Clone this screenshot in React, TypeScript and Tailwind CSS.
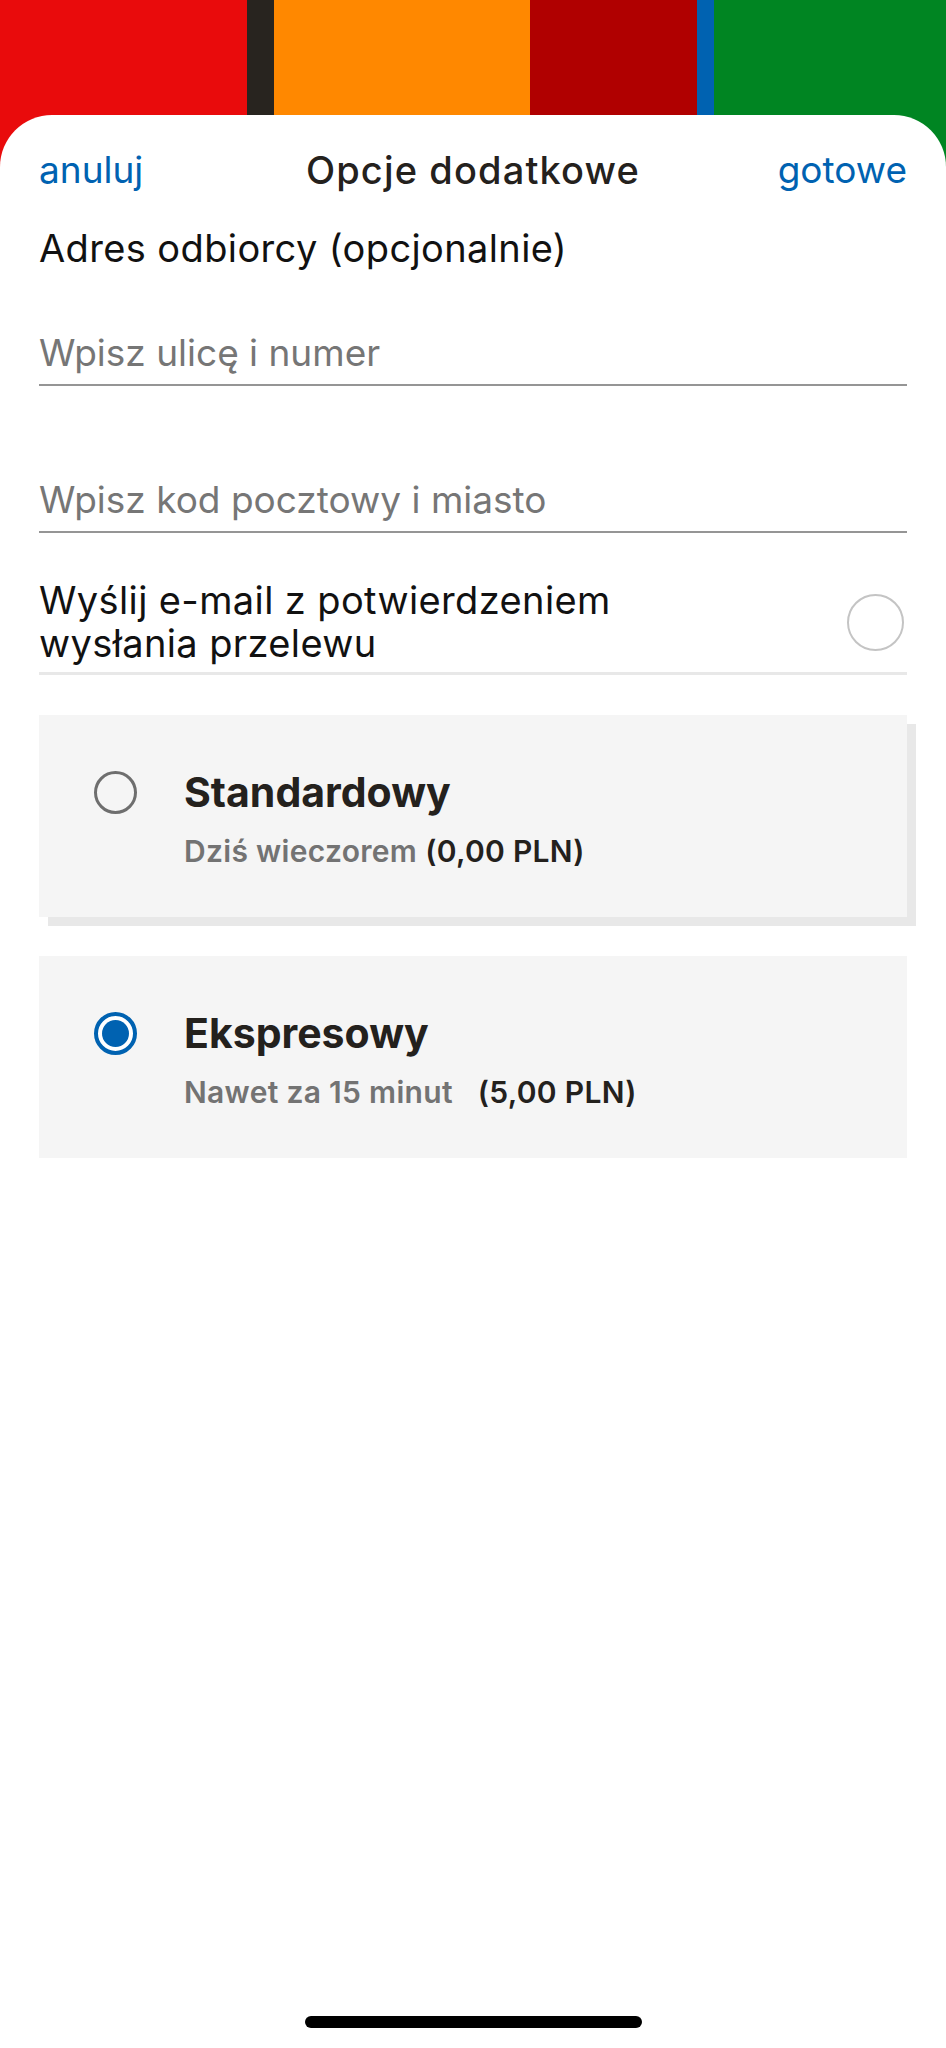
import React, { useState } from 'react';

const stripes = [
  { w: 'w-[247px]', color: 'bg-[#e90b0c]' },
  { w: 'w-[27px]', color: 'bg-[#28241f]' },
  { w: 'w-[256px]', color: 'bg-[#ff8800]' },
  { w: 'w-[167px]', color: 'bg-[#b00000]' },
  { w: 'w-[17px]', color: 'bg-[#0062b1]' },
  { w: 'flex-1', color: 'bg-[#008522]' },
];

type Option = {
  id: string;
  title: string;
  time: string;
  price: string;
  wide?: boolean;
};

const options: Option[] = [
  { id: 'standard', title: 'Standardowy', time: 'Dziś wieczorem', price: '(0,00 PLN)' },
  { id: 'express', title: 'Ekspresowy', time: 'Nawet za 15 minut', price: '(5,00 PLN)', wide: true },
];

const Radio = ({ checked }: { checked: boolean }) =>
  checked ? (
    <span className="flex h-[43px] w-[43px] shrink-0 items-center justify-center rounded-full border-[4px] border-[#0062b1] bg-white">
      <span className="h-[27px] w-[27px] rounded-full bg-[#0062b1]" />
    </span>
  ) : (
    <span className="h-[43px] w-[43px] shrink-0 rounded-full border-[3px] border-[#6e6e6e]" />
  );

export default function App() {
  const [selected, setSelected] = useState('express');
  const [email, setEmail] = useState(false);

  return (
    <div className="relative min-h-[2048px] bg-white font-['Inter',sans-serif] text-[#1f1d1a]">
      {/* Header stripes */}
      <div className="flex h-[170px]">
        {stripes.map((s, i) => (
          <div key={i} className={`${s.w} ${s.color}`} />
        ))}
      </div>

      {/* Sheet */}
      <div className="relative -mt-[55px] rounded-t-[52px] bg-white px-[39px]">
        <div className="grid h-[78px] grid-cols-[1fr_auto_1fr] items-end">
          <button className="h-[46px] justify-self-start text-[37px] leading-[46px] text-[#0062b1]">
            anuluj
          </button>
          <h1 className="h-[46px] text-[38px] font-medium leading-[46px] tracking-[0.03em] text-[#24211d]">
            Opcje dodatkowe
          </h1>
          <button className="h-[46px] justify-self-end text-[37px] leading-[46px] text-[#0062b1]">
            gotowe
          </button>
        </div>

        <p className="mt-[32px] text-[38px] leading-[46px] tracking-[0.01em] text-[#111]">
          Adres odbiorcy (opcjonalnie)
        </p>

        <div className="mt-[59px] border-b-2 border-[#959595] pb-[8px]">
          <input
            className="block h-[46px] w-full bg-transparent text-[37px] leading-[46px] outline-none placeholder:text-[#767676]"
            placeholder="Wpisz ulicę i numer"
          />
        </div>

        <div className="mt-[91px] border-b-2 border-[#959595] pb-[8px]">
          <input
            className="block h-[46px] w-full bg-transparent text-[37px] leading-[46px] outline-none placeholder:text-[#767676]"
            placeholder="Wpisz kod pocztowy i miasto"
          />
        </div>

        <div
          className="mt-[46px] flex items-center justify-between border-b-[3px] border-[#e8e8e8] pb-[7px]"
          onClick={() => setEmail(!email)}
        >
          <p className="text-[38px] leading-[43px] tracking-[0.01em] text-[#111]">
            Wyślij e-mail z potwierdzeniem
            <br />
            wysłania przelewu
          </p>
          <span
            className={`mr-[3px] h-[57px] w-[57px] shrink-0 rounded-full border-2 ${
              email ? 'border-[#0062b1] bg-[#0062b1]' : 'border-[#c4c4c4]'
            }`}
          />
        </div>

        <div className="mt-[40px] flex flex-col gap-[39px]">
          {options.map((o) => {
            const active = selected === o.id;
            return (
              <div
                key={o.id}
                onClick={() => setSelected(o.id)}
                className={`flex h-[202px] flex-col bg-[#f5f5f5] pl-[55px] pt-[53px] ${
                  active ? '' : 'shadow-[9px_9px_0_#e8e8e8]'
                }`}
              >
                <div className="flex items-center gap-[47px]">
                  <Radio checked={active} />
                  <span className="text-[41px] font-bold leading-[48px] text-[#24211d]">
                    {o.title}
                  </span>
                </div>
                <p className="mt-[17px] pl-[90px] text-[30px] font-semibold leading-[36px] tracking-[0.01em]">
                  <span className="text-[#737373]">{o.time}</span>
                  <span className={`${o.wide ? 'ml-[25px]' : 'ml-[8px]'} text-[#24211d]`}>
                    {o.price}
                  </span>
                </p>
              </div>
            );
          })}
        </div>
      </div>

      {/* Home indicator */}
      <div className="absolute bottom-[20px] left-[305px] h-[12px] w-[337px] rounded-full bg-black" />
    </div>
  );
}
